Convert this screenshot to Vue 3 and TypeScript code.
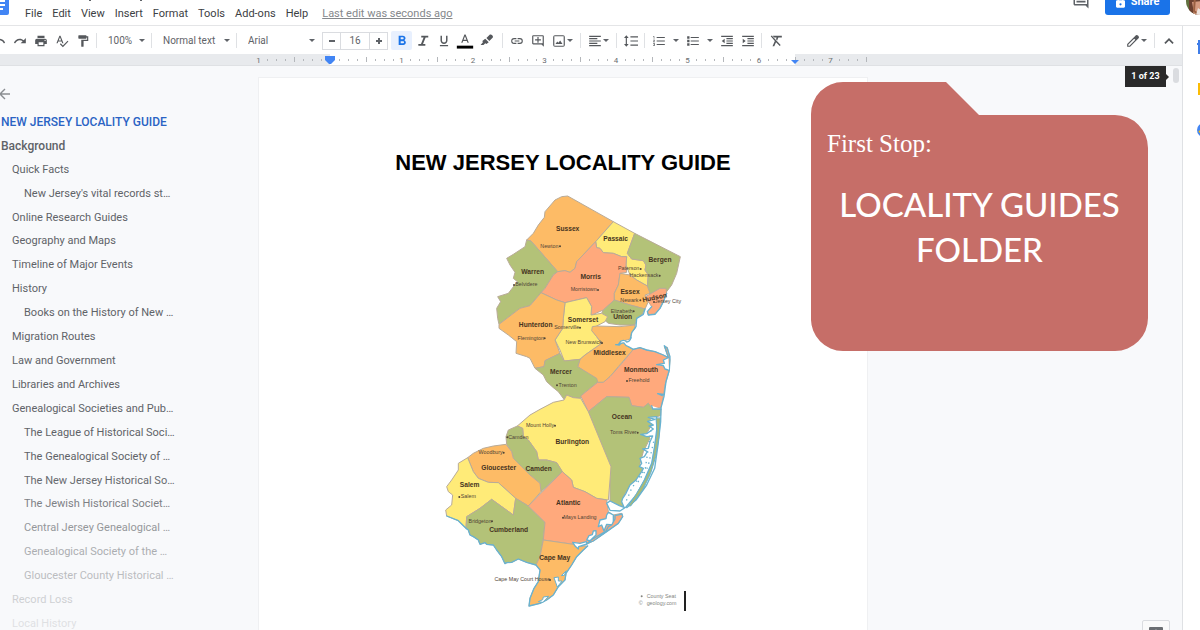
<script setup lang="ts">
interface OutlineItem { text: string; level: number; fade: number }
interface County { name: string; fill: string; points: string; x: number; y: number; rotate?: number }
interface Town { name: string; x: number; y: number; dot: number }

const menus: string[] = ['File', 'Edit', 'View', 'Insert', 'Format', 'Tools', 'Add-ons', 'Help']

const outline: OutlineItem[] = [
  { text: 'NEW JERSEY LOCALITY GUIDE', level: 0, fade: 1 },
  { text: 'Background', level: 1, fade: 1 },
  { text: 'Quick Facts', level: 2, fade: 1 },
  { text: 'New Jersey\'s vital records st…', level: 3, fade: 1 },
  { text: 'Online Research Guides', level: 2, fade: 1 },
  { text: 'Geography and Maps', level: 2, fade: 1 },
  { text: 'Timeline of Major Events', level: 2, fade: 1 },
  { text: 'History', level: 2, fade: 1 },
  { text: 'Books on the History of New …', level: 3, fade: 1 },
  { text: 'Migration Routes', level: 2, fade: 1 },
  { text: 'Law and Government', level: 2, fade: 1 },
  { text: 'Libraries and Archives', level: 2, fade: 1 },
  { text: 'Genealogical Societies and Pub…', level: 2, fade: 1 },
  { text: 'The League of Historical Soci…', level: 3, fade: 1 },
  { text: 'The Genealogical Society of …', level: 3, fade: 1 },
  { text: 'The New Jersey Historical So…', level: 3, fade: 0.95 },
  { text: 'The Jewish Historical Societ…', level: 3, fade: 0.8 },
  { text: 'Central Jersey Genealogical …', level: 3, fade: 0.65 },
  { text: 'Genealogical Society of the …', level: 3, fade: 0.5 },
  { text: 'Gloucester County Historical …', level: 3, fade: 0.4 },
  { text: 'Record Loss', level: 2, fade: 0.27 },
  { text: 'Local History', level: 2, fade: 0.16 },
]

const orange = '#fdbb66'
const green = '#b3c278'
const yellow = '#ffeb78'
const coral = '#ffa97c'

const counties: County[] = [
  { name: 'Sussex', fill: orange, x: 413, y: 139, points: '413,33 550,110 497,170 440,230 435,250 420,262 405,257 383,260 303,168 290,165 310,145 325,120 343,97 345,80 375,45 395,35' },
  { name: 'Warren', fill: green, x: 308, y: 266, points: '303,168 383,260 370,270 345,310 333,323 300,362 270,370 207,418 203,400 200,370 212,350 203,335 235,325 262,290 250,280 255,262 240,240 230,220 250,208 285,185 290,165' },
  { name: 'Passaic', fill: yellow, x: 557, y: 168, points: '550,110 614,145 592,205 605,222 640,227 648,240 645,255 655,270 652,303 620,285 600,270 588,240 590,215 575,215 550,205 520,203 510,190 500,188 497,170' },
  { name: 'Bergen', fill: green, x: 690, y: 231, points: '614,145 751,215 740,265 725,300 710,320 690,310 660,330 652,303 655,270 645,255 648,240 640,227 605,222 592,205' },
  { name: 'Morris', fill: coral, x: 482, y: 283, points: '497,170 500,188 510,190 520,203 550,205 575,215 590,215 588,240 590,262 570,265 565,300 553,325 553,345 520,375 490,388 483,390 485,365 470,338 405,353 380,345 333,323 345,310 370,270 383,260 405,257 420,262 435,250 440,230' },
  { name: 'Essex', fill: orange, x: 600, y: 327, points: '570,265 600,270 620,285 652,303 660,325 645,330 655,350 645,372 600,360 553,345 553,325 565,300' },
  { name: 'Union', fill: green, x: 578, y: 403, points: '553,345 600,360 645,372 635,390 620,400 615,420 570,420 535,415 515,398 533,395 515,385 520,375' },
  { name: 'Hudson', fill: coral, x: 675, y: 344, rotate: -12, points: '655,330 690,310 708,310 710,325 700,350 690,370 675,385 655,390 652,380 665,365 655,350 645,335' },
  { name: 'Somerset', fill: yellow, x: 459, y: 411, points: '405,353 470,338 485,365 483,390 515,385 533,395 525,410 500,423 487,435 500,455 515,475 465,510 450,523 403,528 390,495 375,465 398,430 400,400' },
  { name: 'Hunterdon', fill: orange, x: 317, y: 425, points: '333,323 380,345 405,353 400,400 398,430 375,465 390,505 345,527 342,545 315,550 300,520 290,515 258,505 260,470 235,450 207,430 207,418 270,370 300,362' },
  { name: 'Middlesex', fill: orange, x: 539, y: 509, points: '487,425 500,423 570,425 615,420 615,430 605,443 600,462 580,468 595,485 610,493 595,510 565,545 540,575 520,592 503,592 500,585 443,545 450,523 465,510 515,475 500,455 485,437' },
  { name: 'Mercer', fill: green, x: 393, y: 567, points: '390,505 403,528 450,523 443,545 500,580 503,592 455,630 452,640 430,638 410,630 402,643 385,620 370,608 350,590 340,570 315,550 342,545 345,527' },
  { name: 'Monmouth', fill: coral, x: 633, y: 562, points: '610,493 630,488 650,495 675,500 700,510 715,518 703,485 712,487 720,525 717,560 705,600 700,635 693,668 665,670 655,655 640,667 605,662 597,637 530,635 475,680 452,633 503,592 520,592 540,575 580,530' },
  { name: 'Ocean', fill: green, x: 576, y: 702, points: '530,635 597,637 605,662 640,667 655,655 665,670 693,672 692,692 660,700 665,720 650,745 660,760 640,800 630,835 638,855 618,885 595,910 580,935 580,965 565,960 540,948 540,845 475,680' },
  { name: 'Burlington', fill: yellow, x: 427, y: 776, points: '410,630 430,638 452,640 475,680 543,845 540,885 535,945 500,940 465,920 430,907 425,885 397,860 380,833 350,825 325,825 320,800 295,765 280,755 278,730 262,723 300,690 330,673 370,652 402,645' },
  { name: 'Camden', fill: green, x: 326, y: 857, points: '262,723 235,735 228,755 230,778 245,800 250,820 275,845 300,870 330,895 333,920 397,860 380,833 350,825 325,825 320,800 295,765 280,755 278,730' },
  { name: 'Gloucester', fill: orange, x: 206, y: 855, points: '228,778 190,783 160,790 130,805 113,818 130,860 145,880 175,892 205,893 257,940 295,963 333,920 330,895 300,870 275,845 250,820 245,800' },
  { name: 'Salem', fill: yellow, x: 119, y: 906, points: '113,818 85,835 85,855 65,885 50,905 55,920 68,930 65,960 47,975 50,993 85,1007 108,1030 110,995 150,970 185,943 250,990 257,940 205,893 175,892 145,880 130,860' },
  { name: 'Cumberland', fill: green, x: 236, y: 1042, points: '110,995 150,970 185,943 250,990 257,940 295,963 345,1012 340,1060 330,1115 318,1140 290,1132 265,1122 245,1132 230,1133 225,1136 215,1115 200,1095 190,1080 170,1078 165,1073 150,1078 145,1065 130,1055 120,1050 115,1035 108,1030' },
  { name: 'Atlantic', fill: coral, x: 415, y: 961, points: '295,963 397,860 425,885 430,907 465,920 500,940 530,945 535,980 550,990 575,985 578,995 565,1015 530,1040 490,1068 465,1080 430,1078 340,1065 345,1012' },
  { name: 'Cape May', fill: orange, x: 374, y: 1126, points: '340,1065 430,1078 440,1085 473,1083 460,1095 440,1115 425,1140 408,1165 405,1185 385,1205 370,1230 350,1245 330,1255 297,1263 300,1240 312,1210 325,1190 330,1155 318,1140 330,1115' },
]

const towns: Town[] = [
  { name: 'Newton', x: 358, y: 188, dot: 390 },
  { name: 'Belvidere', x: 289, y: 304, dot: 252 },
  { name: 'Paterson', x: 596, y: 256, dot: 632 },
  { name: 'Hackensack', x: 642, y: 276, dot: 689 },
  { name: 'Morristown', x: 461, y: 319, dot: 504 },
  { name: 'Newark', x: 598, y: 350, dot: 631 },
  { name: 'Jersey City', x: 714, y: 355, dot: 672 },
  { name: 'Elizabeth', x: 575, y: 383, dot: 611 },
  { name: 'Somerville', x: 410, y: 432, dot: 450 },
  { name: 'Flemington', x: 302, y: 464, dot: 344 },
  { name: 'New Brunswick', x: 461, y: 478, dot: 516 },
  { name: 'Trenton', x: 413, y: 605, dot: 381 },
  { name: 'Freehold', x: 627, y: 592, dot: 591 },
  { name: 'Mount Holly', x: 330, y: 726, dot: 375 },
  { name: 'Toms River', x: 580, y: 747, dot: 623 },
  { name: 'Camden', x: 265, y: 761, dot: 232 },
  { name: 'Woodbury', x: 182, y: 807, dot: 221 },
  { name: 'Salem', x: 115, y: 940, dot: 88 },
  { name: 'Mays Landing', x: 450, y: 1002, dot: 399 },
  { name: 'Bridgeton', x: 150, y: 1013, dot: 186 },
  { name: 'Cape May Court House', x: 277, y: 1189, dot: 360 },
]

const origin = 330
const inch = 71.5
const numbers = [-1, 1, 2, 3, 4, 5, 6, 7].map(n => ({ label: Math.abs(n), x: origin + n * inch }))
const ticks = Array.from({ length: 69 }, (_, i) => i - 8)
  .filter(i => i % 8 !== 0 || i === 60)
  .map(i => ({ x: Math.round(origin + (i * inch) / 8), tall: i % 4 === 0 }))
</script>

<template>
  <div class="app">
    <header class="header">
      <svg class="logo" viewBox="0 0 150 16" aria-hidden="true">
        <path d="M0 0H9V13Q9 15 7 15H0Z" fill="#4285f4" />
        <path d="M0 1H5M0 5H5M0 9H3" stroke="#fff" stroke-width="2" />
        <path d="M90 0V1M141 0V1" stroke="#5f6368" stroke-width="2" />
      </svg>
      <nav class="menus">
        <button v-for="m in menus" :key="m" type="button">{{ m }}</button>
        <a href="#history">Last edit was seconds ago</a>
      </nav>
      <div class="account">
        <button class="plain" type="button" aria-label="Comments">
          <svg width="18" height="18" viewBox="0 0 24 24"><path fill="#5f6368" d="M22 4a2 2 0 0 0-2-2H4a2 2 0 0 0-2 2v12c0 1.1.9 2 2 2h14l4 4zM4 4h16v12H4z" /><path d="M6 12h12v2H6zM6 9h12v2H6z" fill="#5f6368" /></svg>
        </button>
        <button class="share" type="button">
          <svg width="9" height="12" viewBox="0 0 16 20"><path fill="#fff" fill-rule="evenodd" d="M14 7h-1V5A5 5 0 0 0 3 5v2H2a2 2 0 0 0-2 2v9c0 1 1 2 2 2h12a2 2 0 0 0 2-2V9a2 2 0 0 0-2-2M5 5a3 3 0 0 1 6 0v2H5zm3 11a2 2 0 1 1 0-4 2 2 0 0 1 0 4" /></svg>
          Share
        </button>
        <svg class="avatar" viewBox="0 0 28 28" role="img" aria-label="Account">
          <defs><clipPath id="face"><circle cx="14" cy="14" r="14" /></clipPath></defs>
          <g clip-path="url(#face)">
            <rect width="28" height="28" fill="#62713f" />
            <path d="M3 28V9Q14-5 25 9V28Z" fill="#6c4030" />
            <path d="M6 15Q8 24 7 28H20L18 14Z" fill="#d59a80" />
            <path d="M9 9L8 24L12 27" stroke="#9a6042" stroke-width="2" fill="none" />
            <path d="M12 21Q16 24 19 21V28H10Z" fill="#eee4df" />
          </g>
        </svg>
      </div>
    </header>

    <div class="below">
      <div class="editor">
        <div class="toolbar" role="toolbar" aria-label="Formatting">
          <button class="tool first" type="button" aria-label="Undo"><svg viewBox="0 0 24 24"><path d="M12.500 8c-2.650 0-5.050.99-6.900 2.600L2 7v9h9l-3.620-3.620c1.390-1.160 3.160-1.880 5.120-1.880 3.540 0 6.550 2.310 7.600 5.500l2.370-.78C21.080 11.030 17.150 8 12.500 8" /></svg></button>
          <button class="tool" type="button" aria-label="Redo"><svg viewBox="0 0 24 24"><path d="M18.400 10.600C16.550 8.990 14.150 8 11.500 8c-4.650 0-8.580 3.030-9.960 7.220L3.900 16c1.050-3.190 4.050-5.500 7.600-5.500 1.950 0 3.730.72 5.120 1.880L13 16h9V7z" /></svg></button>
          <button class="tool" type="button" aria-label="Print"><svg viewBox="0 0 24 24"><path d="M19 8H5c-1.660 0-3 1.340-3 3v6h4v4h12v-4h4v-6c0-1.660-1.340-3-3-3m-3 11H8v-5h8zm3-7a1 1 0 1 1 0-2 1 1 0 0 1 0 2M18 3H6v4h12z" /></svg></button>
          <button class="tool" type="button" aria-label="Spelling"><svg viewBox="0 0 24 24"><path d="M12.450 16h2.090L9.430 3H7.570L2.460 16h2.090l1.120-3h5.640zm-6.020-5L8.500 5.480 10.570 11zm15.160.59-8.090 8.090L9.830 16l-1.410 1.410 5.090 5.090L23 13z" /></svg></button>
          <button class="tool" type="button" aria-label="Paint format"><svg viewBox="0 0 24 24"><path d="M18 4V3c0-.55-.45-1-1-1H5c-.55 0-1 .45-1 1v4c0 .55.45 1 1 1h12c.55 0 1-.45 1-1V6h1v4H9v11c0 .55.45 1 1 1h2c.55 0 1-.45 1-1v-9h8V4z" /></svg></button>
          <i class="rule" />
          <label class="picker zoom"><select aria-label="Zoom"><option>100%</option></select><svg class="caret" viewBox="0 0 8 5"><path d="M1 1h6L4 4z" /></svg></label>
          <i class="rule" />
          <label class="picker style"><select aria-label="Styles"><option>Normal text</option></select><svg class="caret" viewBox="0 0 8 5"><path d="M1 1h6L4 4z" /></svg></label>
          <i class="rule" />
          <label class="picker style"><select aria-label="Font"><option>Arial</option></select><svg class="caret" viewBox="0 0 8 5"><path d="M1 1h6L4 4z" /></svg></label>
          <div class="size">
            <button type="button" aria-label="Decrease font size"><svg viewBox="0 0 8 8"><path d="M1 3h6v2H1z" /></svg></button>
            <input aria-label="Font size" value="16" />
            <button type="button" aria-label="Increase font size"><svg viewBox="0 0 8 8"><path d="M1 3h2V1h2v2h2v2H5v2H3V5H1z" /></svg></button>
          </div>
          <button class="tool on" type="button" aria-label="Bold"><svg viewBox="0 0 24 24"><path d="M15.600 10.790c.97-.67 1.650-1.770 1.650-2.790 0-2.260-1.750-4-4-4H7v14h7.040c2.090 0 3.710-1.700 3.710-3.790 0-1.520-.86-2.820-2.150-3.420M10 6.500h3c.83 0 1.500.67 1.500 1.500s-.67 1.500-1.500 1.500h-3zm3.500 9H10v-3h3.500c.83 0 1.500.67 1.500 1.500s-.67 1.500-1.500 1.500" /></svg></button>
          <button class="tool" type="button" aria-label="Italic"><svg viewBox="0 0 24 24"><path d="M9 3v3h4l-4.500 11H4v3h12v-3h-4l4.500-11H21V3z" /></svg></button>
          <button class="tool" type="button" aria-label="Underline"><svg viewBox="0 0 24 24"><path d="M12 17c3.310 0 6-2.690 6-6V3h-2.500v8a3.500 3.500 0 0 1-7 0V3H6v8c0 3.310 2.690 6 6 6m-7 2v2h14v-2z" /></svg></button>
          <button class="tool" type="button" aria-label="Text color"><svg viewBox="0 0 24 24"><path d="M11 1 5.500 15h2.250l1.120-3h6.250l1.120 3h2.250L13 1zm-1.380 9L12 3.670 14.380 10z" /><path d="M-2 20h28v5H-2z" fill="#000" /></svg></button>
          <button class="tool wide" type="button" aria-label="Highlight color"><svg viewBox="0 0 24 24"><path d="M11 7 17 1q2-1 4 1t1 4l-6 6zM9 8l6 6-4 3-2-1-3 3H1l4-5-1-2z" /></svg></button>
          <i class="rule" />
          <button class="tool" type="button" aria-label="Insert link"><svg viewBox="0 0 24 24"><path d="M3.900 12c0-1.710 1.390-3.100 3.100-3.100h4V7H7a5 5 0 0 0 0 10h4v-1.900H7c-1.710 0-3.100-1.390-3.100-3.100M8 13h8v-2H8zm9-6h-4v1.900h4a3.100 3.100 0 0 1 0 6.200h-4V17h4a5 5 0 0 0 0-10" /></svg></button>
          <button class="tool" type="button" aria-label="Add comment"><svg viewBox="0 0 24 24"><path d="M22 4a2 2 0 0 0-2-2H4a2 2 0 0 0-2 2v12c0 1.100.9 2 2 2h14l4 4zM4 4h16v12H4zm7 1h2v4h4v2h-4v4h-2v-4H7V9h4z" /></svg></button>
          <button class="tool combo" type="button" aria-label="Insert image"><svg viewBox="0 0 24 24"><path fill-rule="evenodd" d="M5 2h14q3 0 3 3v14q0 3-3 3H5q-3 0-3-3V5q0-3 3-3m-1 2v16h16V4zm2 13 3-4 2 2 3-4 4 6z" /></svg><svg class="caret" viewBox="0 0 8 5"><path d="M1 1h6L4 4z" /></svg></button>
          <i class="rule" />
          <button class="tool combo" type="button" aria-label="Align"><svg viewBox="0 0 24 24"><path d="M2 3h20v2H2zM2 7h14v2H2zM2 11h20v2H2zM2 15h14v2H2zM2 19h20v2H2z" /></svg><svg class="caret" viewBox="0 0 8 5"><path d="M1 1h6L4 4z" /></svg></button>
          <i class="rule" />
          <button class="tool" type="button" aria-label="Line spacing"><svg viewBox="0 0 24 24"><path d="M5 7h3L4 2 0 7h3v10H0l4 5 4-5H5zm6-3v2h13V4zm0 7v2h13v-2zm0 7v2h13v-2z" /></svg></button>
          <i class="rule" />
          <button class="tool" type="button" aria-label="Numbered list"><svg viewBox="0 0 24 24"><path d="M2 17h2v.5H3v1h1v.5H2v1h3v-4H2zm1-9h1V4H2v1h1zm-1 3h1.800L2 13.100v.9h3v-1H3.200L5 10.900V10H2zm6-6v2h14V5zm0 14h14v-2H8zm0-6h14v-2H8z" /></svg></button>
          <button class="drop" type="button" aria-label="Numbered list options"><svg class="caret" viewBox="0 0 8 5"><path d="M1 1h6L4 4z" /></svg></button>
          <button class="tool" type="button" aria-label="Bulleted list"><svg viewBox="0 0 24 24"><path d="M2 4h4v4H2zM2 10h4v4H2zM2 16h4v4H2zM8 5h14v2H8zM8 11h14v2H8zM8 17h14v2H8z" /></svg></button>
          <button class="drop" type="button" aria-label="Bulleted list options"><svg class="caret" viewBox="0 0 8 5"><path d="M1 1h6L4 4z" /></svg></button>
          <button class="tool" type="button" aria-label="Decrease indent"><svg viewBox="0 0 24 24"><path d="M2 3h20v2H2zM11 7h11v2H11zM11 11h11v2H11zM11 15h11v2H11zM2 19h20v2H2zM8 8v8l-5-4z" /></svg></button>
          <button class="tool" type="button" aria-label="Increase indent"><svg viewBox="0 0 24 24"><path d="M2 3h20v2H2zM11 7h11v2H11zM11 11h11v2H11zM11 15h11v2H11zM2 19h20v2H2zM3 8v8l5-4z" /></svg></button>
          <i class="rule" />
          <button class="tool" type="button" aria-label="Clear formatting"><svg viewBox="0 0 24 24"><path d="M5 3h17v3h-6l-2 5-2-2 1-3H9L6 3zM3 4l1.500-1.500L20 19l-1.500 1.500L12 14l-3 7H6l4-9z" /></svg></button>
          <button class="tool combo mode" type="button" aria-label="Editing mode"><svg viewBox="0 0 24 24"><path fill-rule="evenodd" d="M2 17 17 2q2-1 4 1t1 4L7 22H2zm2 1v2h2L16 10l-2-2z" /></svg><svg class="caret" viewBox="0 0 8 5"><path d="M1 1h6L4 4z" /></svg></button>
          <i class="rule" />
          <button class="tool last" type="button" aria-label="Hide menus"><svg viewBox="0 0 24 24"><path d="m12 7-8 8 2 2 6-6 6 6 2-2z" /></svg></button>
        </div>

        <div class="ruler">
          <svg width="1182" height="11" aria-hidden="true">
            <rect x="330" width="465" height="11" fill="#fff" />
            <rect v-for="t in ticks" :key="t.x" :x="t.x" :y="t.tall ? 3 : 5" width="1" :height="t.tall ? 5 : 2" fill="#b4b7bb" />
            <text v-for="n in numbers" :key="n.x" :x="n.x" y="9" text-anchor="middle">{{ n.label }}</text>
            <path d="M325 2h10v4l-4 4h-2l-4-4z" fill="#4285f4" />
            <path d="M791 6h8l-4 4z" fill="#4285f4" />
          </svg>
        </div>

        <div class="workspace">
          <aside class="outline">
            <button class="back" type="button" aria-label="Close outline">
              <svg width="11" height="12" viewBox="0 0 11 12"><path d="M10 6H1M5 1L0 6L5 11" fill="none" stroke="#8a8d91" stroke-width="1.400" /></svg>
            </button>
            <ul>
              <li v-for="o in outline" :key="o.text" :class="'level' + o.level" :style="{ opacity: o.fade }"><a href="#section">{{ o.text }}</a></li>
            </ul>
          </aside>

          <main class="page">
            <h1>NEW JERSEY LOCALITY GUIDE</h1>
            <div class="figure">
              <svg class="map" viewBox="0 0 762 1278" role="img" aria-label="New Jersey counties">
                <g stroke="#b9ab98" stroke-width="3" stroke-linejoin="round">
                  <polygon v-for="c in counties" :key="c.name" :points="c.points" :fill="c.fill" />
                </g>
                <g fill="#fff" stroke="#68b2d0" stroke-width="4" stroke-linejoin="round" stroke-linecap="round">
                  <path fill="none" d="M710 325L700 350L690 370L675 388L655 390L652 380L665 365M645 372L640 388L620 400L618 425L605 443L602 460" />
                  <path d="M603 458Q600 470 590 471Q583 463 573 468L565 479L557 479L568 480Q575 472 582 474Q586 482 595 485L610 493" />
                  <path fill="none" d="M610 493L630 488L650 495L675 500L700 510L715 518L705 487L703 482L712 490L720 515L718 555L708 590L702 635L693 668L692 710L684 780L674 850L650 900L618 945L590 968" />
                  <path d="M715 518L700 525L703 535L680 539L700 542L705 552L717 556M702 628L683 626L697 632M693 672H668L665 662" />
                  <path d="M680 695L655 697L675 703L653 709L670 720L657 723L670 732L650 746L632 748L650 755L668 753L660 770L655 790L638 792L652 800L643 815L630 820L635 835L628 845L640 850L635 860L618 885L600 900L588 925L578 940L575 950L582 967L568 962L540 948L530 955L540 976L570 978L588 966L620 928L643 885L665 835L673 790L680 735Z" />
                  <path d="M678 700L681 740L674 785L666 835L645 883L620 925L596 962L602 963L638 915L662 865L677 815L687 755L691 700Z" fill="#a9ba76" stroke-width="3" />
                  <path d="M535 982L550 990L550 1020L530 1018L522 1038L515 1020L505 1025L510 1005L528 1001L530 990Z" />
                  <path d="M555 992L576 987L578 995L565 1015L530 1040L490 1068L472 1075L483 1065L528 1038L535 1025L545 1020L555 1002Z" fill="#ffa97c" />
                  <path d="M498 1037L498 1050L480 1067L470 1065L477 1052L487 1049L490 1038ZM428 1072L450 1075L469 1070L471 1077L446 1085L445 1092L436 1084Z" />
                  <path fill="none" d="M473 1083L460 1095L440 1115L425 1140L408 1165L405 1185L385 1205L370 1230L350 1245L330 1255L297 1263L300 1240L312 1210L325 1190L330 1155L318 1140L290 1132L265 1122L245 1132L230 1133L225 1136L215 1115L200 1095L190 1080L170 1078L165 1073L150 1078L145 1065L130 1055L120 1050L115 1035L108 1030L85 1007L50 993" />
                  <path d="M408 1158L394 1172L402 1171ZM373 1178L385 1176L385 1188L396 1188L382 1206L378 1195ZM355 1234L340 1236L338 1244L325 1250L338 1252Z" stroke-width="3" />
                </g>
                <g fill="none" stroke="#68b2d0" stroke-width="4" stroke-dasharray="4 12"><path d="M665 720L655 790L646 850L605 910L588 950" /><path d="M671 770L654 845L618 900" /></g>
                <g class="county">
                  <text v-for="c in counties" :key="c.name" :x="c.x" :y="c.y" :transform="c.rotate ? `rotate(${c.rotate} ${c.x} ${c.y})` : undefined">{{ c.name }}</text>
                </g>
                <g class="town">
                  <template v-for="t in towns" :key="t.name">
                    <text :x="t.x" :y="t.y">{{ t.name }}</text>
                    <circle :cx="t.dot" :cy="t.y - 4" r="3" />
                  </template>
                </g>
                <g class="credit">
                  <circle cx="635" cy="1234" r="3" />
                  <text x="650" y="1239">County Seat</text>
                  <text x="626" y="1260">©</text>
                  <text x="650" y="1260">geology.com</text>
                </g>
              </svg>
              <span class="cursor" />
            </div>
          </main>

          <section class="folder">
            <svg viewBox="0 0 337 269" aria-hidden="true"><path fill="#c66e68" d="M32 0H135L168 33H304A33 33 0 0 1 337 66V236A33 33 0 0 1 304 269H32A32 32 0 0 1 0 236V32A32 32 0 0 1 32 0Z" /></svg>
            <p>First Stop:</p>
            <h2>LOCALITY GUIDES<br />FOLDER</h2>
          </section>

          <div class="count">1 of 23</div>
          <div class="thumb" />
          <button class="explore" type="button" aria-label="Explore"><svg width="14" height="14" viewBox="0 0 14 14"><path d="M1 0h12q1 0 1 1v12H0V1q0-1 1-1" fill="#6b6e72" /><path d="m7 2 1 3 3 1-3 1-1 3-1-3-3-1 3-1z" fill="#fff" /></svg></button>
        </div>
      </div>

      <aside class="side" aria-label="Side panel">
        <svg width="20" height="120" viewBox="0 0 20 120">
          <path d="M1 0h14v14H1V5H0V3h1z" fill="#3f7de8" />
          <path d="M1 43h14v12H1z" fill="#fbbc04" />
          <circle cx="7" cy="90" r="7" fill="#4285f4" /><path d="m2 91 4 3 6-8" fill="none" stroke="#fbbc04" stroke-width="2" />
        </svg>
      </aside>
    </div>
  </div>
</template>

<style>
body { margin: 0; }
</style>

<style scoped>
* { box-sizing: border-box; }
.app { height: 100vh; display: flex; flex-direction: column; overflow: hidden; background: #fff; color: #5f6368; font: 11px/16px Roboto, sans-serif; }
button { border: 0; padding: 0; background: none; color: inherit; font: inherit; cursor: pointer; }
a { color: inherit; text-decoration: none; }
svg { display: block; flex: none; }

.header { flex: none; height: 26px; display: flex; align-items: flex-start; overflow: hidden; border-bottom: 1px solid #e4e5e7; }
.logo { width: 150px; height: 16px; margin-right: -150px; }
.menus { display: flex; gap: 10px; padding: 6px 0 0 25px; }
.menus button { color: #3c4043; }
.menus a { margin-left: 4px; color: #85888c; text-decoration: underline; }
.account { display: flex; align-items: center; height: 28px; margin: -13px -14px 0 auto; }
.plain { margin-right: 15px; }
.share { display: flex; align-items: center; justify-content: center; gap: 6px; width: 65px; height: 28px; padding-top: 2px; border-radius: 3px; background: #1a73e8; color: #fff; font-weight: 700; }
.avatar { width: 28px; height: 28px; margin-left: 16px; }

.below { flex: 1; min-height: 0; display: flex; }
.editor { flex: 1; min-width: 0; display: flex; flex-direction: column; }
.side { width: 18px; overflow: hidden; border-left: 1px solid #dfe1e4; padding: 14px 0 0 14px; }

.toolbar { flex: none; height: 28px; display: flex; align-items: center; padding-top: 1px; }
.tool { flex: none; width: 21px; height: 19px; display: flex; align-items: center; justify-content: center; border-radius: 2px; }
.tool svg { width: 14px; height: 14px; fill: #55585c; overflow: visible; }
.tool.first { margin-left: -12px; }
.tool.last { margin-right: 3px; }
.tool.on { background: #e8f0fe; }
.tool.on svg { width: 16px; height: 16px; fill: #1a73e8; }
.tool.wide { width: 24px; }
.tool.combo { width: 29px; }
.tool.mode { margin-left: auto; }
.caret, .tool .caret { width: 8px; height: 5px; fill: #5f6368; }
.drop { width: 13px; display: flex; justify-content: center; }
.rule { width: 1px; height: 15px; margin: 0 3px; background: #dfe1e4; }
.picker { display: flex; align-items: center; padding: 0 2px 0 8px; }
.picker select { appearance: none; flex: 1; min-width: 0; border: 0; padding: 0; background: none; color: #5f6368; font: 10px/16px Roboto, sans-serif; }
.zoom { width: 48px; }
.style { width: 78px; }
.size { display: flex; height: 18px; margin: 0 3px 0 4px; border: 1px solid #dadce0; }
.size button { width: 17px; display: flex; align-items: center; justify-content: center; }
.size svg { width: 8px; height: 8px; fill: #5f6368; }
.size input { width: 30px; border: solid #dadce0; border-width: 0 1px; padding: 0; text-align: center; color: #5f6368; font: 10px/16px Roboto, sans-serif; }

.ruler { flex: none; height: 12px; overflow: hidden; background: #e8eaed; border-bottom: 1px solid #dfe1e4; }
.ruler text { fill: #6b6e72; font-size: 8px; }

.workspace { flex: 1; min-height: 0; display: flex; position: relative; background: #f8f9fb; overflow: hidden; }
.outline { flex: none; width: 258px; display: flex; flex-direction: column; padding-top: 22px; }
.back { height: 12px; align-self: flex-start; margin-bottom: 10px; }
.outline ul { flex: 1; display: grid; grid-auto-rows: 1fr; align-items: center; margin: 0 0 -6px; padding: 0; list-style: none; white-space: nowrap; }
.level0 { padding-left: 1px; color: #2a63c4; font-size: 12px; font-weight: 500; }
.level1 { padding-left: 1px; font-size: 12px; font-weight: 500; }
.level2 { padding-left: 12px; }
.level3 { padding-left: 24px; }

.page { flex: 0 1 610px; min-width: 0; margin-top: 11px; padding-top: 70px; background: #fff; border: 1px solid #eff0f2; border-bottom: 0; }
.page h1 { margin: 0; text-align: center; color: #000; font: 700 22px/30px "Liberation Sans", Arial, sans-serif; }
.figure { display: flex; justify-content: center; align-items: flex-end; margin-top: 7px; padding-right: 10px; }
.map { width: 254px; height: 426px; }
.cursor { width: 2px; height: 20px; background: #222; }
.map text { font-family: "Liberation Sans", Arial, sans-serif; }
.county text { font-size: 20px; font-weight: 700; fill: #453321; text-anchor: middle; }
.town { fill: #514436; }
.town text { font-size: 16px; text-anchor: middle; }
.credit { fill: #85857f; }
.credit text { font-size: 16px; }

.folder { position: absolute; left: 811px; top: 16px; width: 337px; height: 269px; color: #fff; }
.folder svg { position: absolute; inset: 0; }
.folder p { position: relative; margin: 0; padding: 47px 16px 0; font: 25px/30px "Liberation Serif", serif; }
.folder h2 { position: relative; margin: 23px 0 0; text-align: center; font: 500 33px/45px Lato, sans-serif; }

.count { position: absolute; right: 16px; top: 0; width: 41px; height: 21px; background: #2a2a2a; color: #fff; font-size: 9px; line-height: 21px; font-weight: 700; text-align: center; }
.count::after { content: ""; position: absolute; left: 100%; top: 8px; border: 3px solid transparent; border-left-color: #2a2a2a; border-right: 0; }
.thumb { position: absolute; right: 3px; top: 2px; width: 6px; height: 15px; border-radius: 3px; background: #dadce0; }
.explore { position: absolute; right: 12px; bottom: -18px; width: 28px; height: 28px; padding: 6px; border: 1px solid #dadce0; border-radius: 2px; background: #fafafa; }
</style>
